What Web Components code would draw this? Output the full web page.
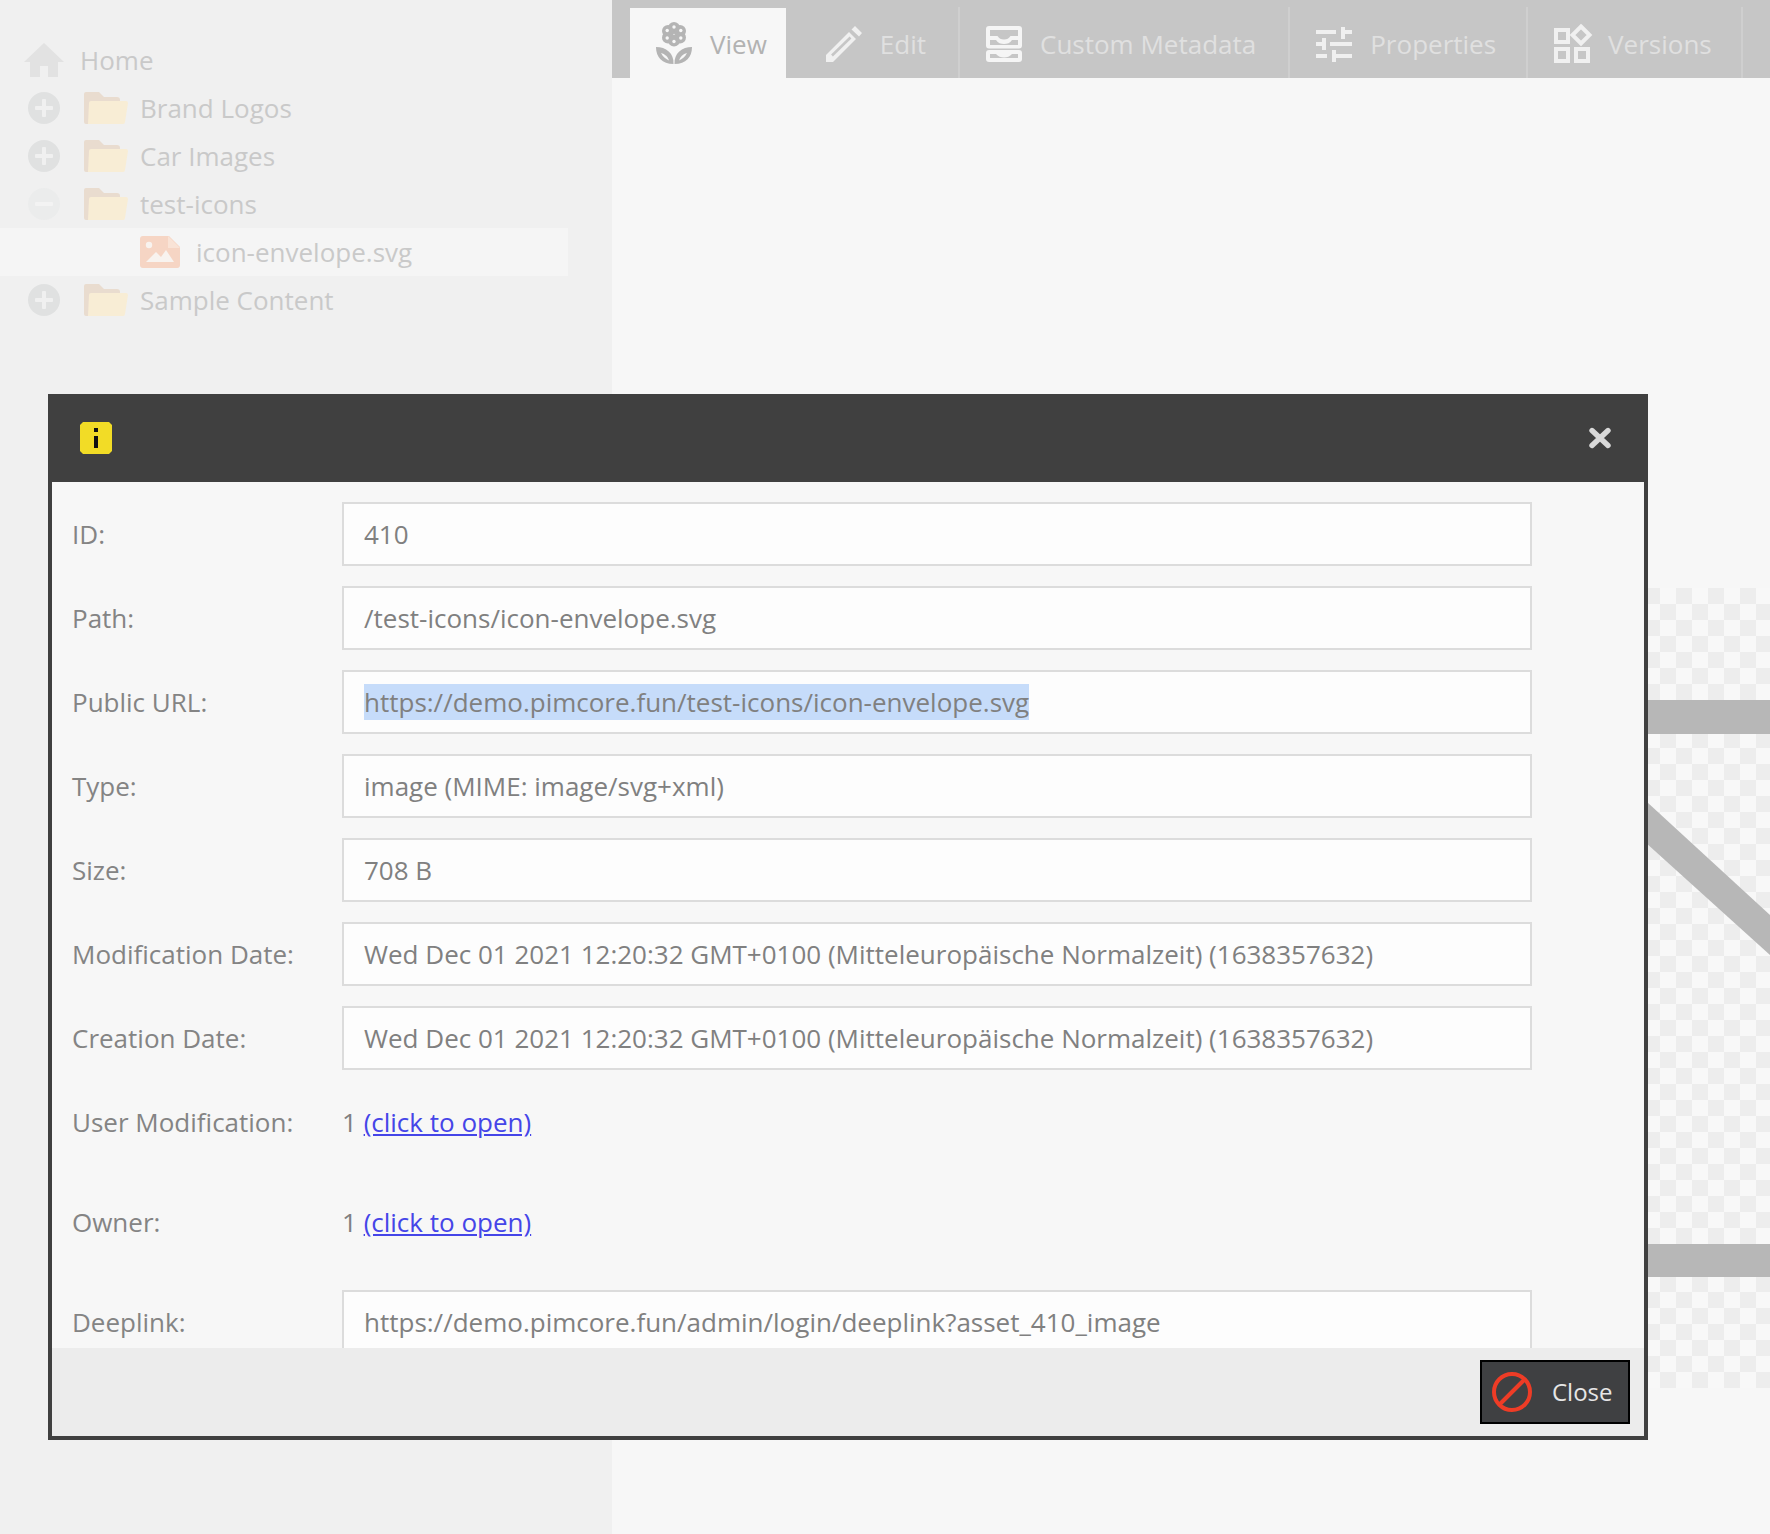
<!DOCTYPE html>
<html lang="en">
<head>
<meta charset="utf-8">
<title>Asset info</title>
<style>
  html, body { margin: 0; height: 100%; }
  body { font-family: "Open Sans", "Noto Sans", sans-serif; overflow: hidden; }
  svg { display: block; }
</style>
</head>
<body>
<pim-shell>
  <pim-tree slot="side">
    <pim-tree-row indent="24" space="16">
      <svg slot="icon" width="40" height="34" viewBox="0 0 40 34"><path fill="#e2e2e2" d="M20 0 40 19H34V34H24V23H16V34H6V19H0Z"/></svg>
      Home
    </pim-tree-row>
    <pim-tree-row indent="28" space="12">
      <pim-expander slot="expander"></pim-expander><pim-folder slot="icon"></pim-folder>
      Brand Logos
    </pim-tree-row>
    <pim-tree-row indent="28" space="12">
      <pim-expander slot="expander"></pim-expander><pim-folder slot="icon"></pim-folder>
      Car Images
    </pim-tree-row>
    <pim-tree-row indent="28" space="12">
      <pim-expander slot="expander" open></pim-expander><pim-folder slot="icon"></pim-folder>
      test-icons
    </pim-tree-row>
    <pim-tree-row indent="140" space="16" selected>
      <svg slot="icon" width="40" height="32" viewBox="0 0 40 32"><path fill="#f6d5c4" d="M3 0H29L40 11V29a3 3 0 0 1-3 3H3a3 3 0 0 1-3-3V3a3 3 0 0 1 3-3Z"/><path fill="#f9e3d6" d="M28 0 40 12H28Z"/><circle cx="9" cy="9" r="3.2" fill="#f8f3ef"/><path fill="#f8f3ef" d="M6 26 16 16 21 21 26 14 34 26Z"/></svg>
      icon-envelope.svg
    </pim-tree-row>
    <pim-tree-row indent="28" space="12">
      <pim-expander slot="expander"></pim-expander><pim-folder slot="icon"></pim-folder>
      Sample Content
    </pim-tree-row>
  </pim-tree>

  <pim-tabs slot="tabs">
    <pim-tab active style="--before:26px;--after:19px">
      <svg slot="icon" width="36" height="42" viewBox="0 0 36 42" style="margin-top:-2px">
        <g fill="#b4b4b4">
          <circle cx="18" cy="6" r="6"/><circle cx="24" cy="9" r="6"/><circle cx="24" cy="15.5" r="6"/>
          <circle cx="18" cy="18.5" r="6"/><circle cx="12" cy="15.5" r="6"/><circle cx="12" cy="9" r="6"/>
          <path d="M0 25C10 25 18 31 17.5 42 6 42 0 35 0 25Z"/><path d="M36 25C26 25 18 31 18.5 42 30 42 36 35 36 25Z"/>
        </g>
        <g fill="#f7f7f7">
          <circle cx="18" cy="5" r="1.7"/><circle cx="24.8" cy="8.5" r="1.7"/><circle cx="24.8" cy="16" r="1.7"/>
          <circle cx="18" cy="19.5" r="1.7"/><circle cx="11.2" cy="16" r="1.7"/><circle cx="11.2" cy="8.5" r="1.7"/>
          <path d="M5 31C9 32 12 35 13 38.500 10 37 7 35 5 31Z"/><path d="M31 31C27 32 24 35 23 38.500 26 37 29 35 31 31Z"/>
        </g>
      </svg>
      View
    </pim-tab>
    <pim-tab style="--before:40px;--after:34px">
      <svg slot="icon" width="36" height="36" viewBox="0 0 36 36">
        <path fill="#f0f0f0" d="M29 0 36 7 33 10.5 25.5 3.5ZM23 6 30 13 7 36H0V29Z"/>
        <path stroke="#c6c6c6" stroke-width="2.6" d="M6 29.5 24.5 11.5"/>
      </svg>
      Edit
    </pim-tab>
    <pim-tab style="--before:26px;--after:34px">
      <svg slot="icon" width="36" height="36" viewBox="0 0 36 36">
        <rect width="36" height="22.5" rx="3" fill="#f5f5f5"/><rect y="24" width="36" height="12" rx="3" fill="#f5f5f5"/>
        <g fill="#c6c6c6">
          <path d="M4 4H32V10H24.5C23 12.5 21 13.5 18 13.5S13 12.5 11.500 10H4Z"/>
          <path d="M4 14H10C12 17 15 18 18 18S24 17 26 14H32V19H4Z"/>
          <path d="M4 28H10C12 30.5 15 31.5 18 31.5S24 30.5 26 28H32V32H4Z"/>
        </g>
      </svg>
      Custom Metadata
    </pim-tab>
    <pim-tab style="--before:26px;--after:32px">
      <svg slot="icon" width="36" height="36" viewBox="0 0 36 36" fill="#f0f0f0">
        <path d="M0 4H20V8H0ZM25 1H29V13H25ZM29 4H36V8H29ZM0 16H10V20H0ZM6 12H10V24H6ZM14 16H36V20H14ZM0 28H11V32H0ZM16 24H20V36H16ZM20 28H36V32H20Z"/>
      </svg>
      Properties
    </pim-tab>
    <pim-tab style="--before:26px;--after:31px">
      <svg slot="icon" width="36" height="40" viewBox="0 0 36 40" fill="none" stroke="#f0f0f0" stroke-width="4" style="margin-top:-2px;overflow:visible">
        <rect x="2" y="7" width="12" height="12"/><rect x="2" y="26" width="12" height="12"/><rect x="22" y="26" width="12" height="12"/>
        <path d="M27 3.5 35.5 12 27 20.5 18.5 12Z"/>
      </svg>
      Versions
    </pim-tab>
  </pim-tabs>

  <pim-preview slot="main"></pim-preview>

  <pim-dialog slot="dialog">
    <pim-field label="ID:">410</pim-field>
    <pim-field label="Path:">/test-icons/icon-envelope.svg</pim-field>
    <pim-field label="Public URL:"><mark>https://demo.pimcore.fun/test-icons/icon-envelope.svg</mark></pim-field>
    <pim-field label="Type:">image (MIME: image/svg+xml)</pim-field>
    <pim-field label="Size:">708 B</pim-field>
    <pim-field label="Modification Date:">Wed Dec 01 2021 12:20:32 GMT+0100 (Mitteleuropäische Normalzeit) (1638357632)</pim-field>
    <pim-field label="Creation Date:">Wed Dec 01 2021 12:20:32 GMT+0100 (Mitteleuropäische Normalzeit) (1638357632)</pim-field>
    <pim-field label="User Modification:" plain>1 <a href="#">(click to open)</a></pim-field>
    <pim-field label="Owner:" plain>1 <a href="#">(click to open)</a></pim-field>
    <pim-field label="Deeplink:">https://demo.pimcore.fun/admin/login/deeplink?asset_410_image</pim-field>
    <pim-button slot="footer">Close</pim-button>
  </pim-dialog>
</pim-shell>

<script>
class PimShell extends HTMLElement {
  constructor() {
    super();
    this.attachShadow({ mode: "open" }).innerHTML = `
      <style>
        :host { display: grid; grid-template-columns: 612px 1fr; height: 1534px; position: relative; overflow: hidden; background: #f7f7f7; }
        .side { background: #f0f0f0; }
        .right { display: flex; flex-direction: column; min-width: 0; }
        .main { flex: 1; position: relative; overflow: hidden; }
      </style>
      <div class="side"><slot name="side"></slot></div>
      <div class="right">
        <slot name="tabs"></slot>
        <div class="main"><slot name="main"></slot></div>
      </div>
      <slot name="dialog"></slot>`;
  }
}

class PimTree extends HTMLElement {
  constructor() {
    super();
    this.attachShadow({ mode: "open" }).innerHTML = `
      <style>
        :host { display: flex; flex-direction: column; width: 568px; padding-top: 36px; }
      </style>
      <slot></slot>`;
  }
}

class PimTreeRow extends HTMLElement {
  constructor() {
    super();
    this.attachShadow({ mode: "open" }).innerHTML = `
      <style>
        :host { display: flex; align-items: center; height: 48px; font-size: 26px; color: #c9c9c9; }
        :host([selected]) { background: #f5f5f5; }
        .expander { display: flex; }
        ::slotted([slot=expander]) { margin-right: 24px; }
      </style>
      <div class="expander"><slot name="expander"></slot></div>
      <slot name="icon"></slot>
      <span class="label"><slot></slot></span>`;
    this.style.paddingLeft = this.getAttribute("indent") + "px";
    this.shadowRoot.querySelector(".label").style.marginLeft = this.getAttribute("space") + "px";
  }
}

class PimExpander extends HTMLElement {
  constructor() {
    super();
    const open = this.hasAttribute("open");
    const fill = open ? "#ebecec" : "#e0e1e1";
    const mark = open ? "#f3f3f3" : "#f0f0f0";
    const bar = '<rect x="7" y="14" width="18" height="4" rx="1"/>';
    const cross = '<rect x="14" y="7" width="4" height="18" rx="1"/>';
    this.attachShadow({ mode: "open" }).innerHTML = `
      <style>
        :host { display: block; width: 32px; height: 32px; }
      </style>
      <svg width="32" height="32" viewBox="0 0 32 32" style="display:block"><circle cx="16" cy="16" r="16" fill="${fill}"/><g fill="${mark}">${bar}${open ? "" : cross}</g></svg>`;
  }
}

class PimFolder extends HTMLElement {
  constructor() {
    super();
    this.attachShadow({ mode: "open" }).innerHTML = `
      <style>
        :host { display: block; width: 44px; height: 32px; }
      </style>
      <svg width="44" height="32" viewBox="0 0 44 32" style="display:block">
        <path fill="#e9dccf" d="M2 0H15L20 5H33a3 3 0 0 1 3 3V32H2a2 2 0 0 1-2-2V2a2 2 0 0 1 2-2Z"/>
        <path fill="#f8edd5" d="M7 9H42a2 2 0 0 1 2 2L41 30a2 2 0 0 1-2 2H4L5 11a2 2 0 0 1 2-2Z"/>
      </svg>`;
  }
}

class PimTabs extends HTMLElement {
  constructor() {
    super();
    this.attachShadow({ mode: "open" }).innerHTML = `
      <style>
        :host { display: flex; height: 70px; padding: 8px 0 0 18px; background: #c6c6c6; }
      </style>
      <slot></slot>`;
  }
}

class PimTab extends HTMLElement {
  constructor() {
    super();
    this.attachShadow({ mode: "open" }).innerHTML = `
      <style>
        :host { display: flex; align-items: center; gap: 18px; box-sizing: border-box; padding: 2px var(--after) 0 var(--before); font-size: 26px; color: #e0e0e0; position: relative; }
        :host(:not([active]))::after { content: ""; position: absolute; right: 0; top: -1px; bottom: 0; width: 2px; background: #cfcfcf; }
        :host([active]) { background: #f7f7f7; color: #b2b2b2; }
      </style>
      <slot name="icon"></slot><span><slot></slot></span>`;
  }
}

class PimPreview extends HTMLElement {
  constructor() {
    super();
    // checker board starts under the dialog, only its right end shows
    this.attachShadow({ mode: "open" }).innerHTML = `
      <style>
        :host { position: absolute; left: 184px; top: 510px; width: 974px; height: 800px;
          background: repeating-conic-gradient(#ededed 0 25%, #f8f8f8 0 50%) 0 0 / 32px 32px; }
      </style>
      <svg width="974" height="800" viewBox="0 0 974 800" fill="#b7b7b7" style="display:block">
        <rect y="112" width="974" height="34"/>
        <rect y="656" width="974" height="33"/>
        <path d="M618 0 974 327V367L568 0Z"/>
      </svg>`;
  }
}

class PimDialog extends HTMLElement {
  constructor() {
    super();
    this.attachShadow({ mode: "open" }).innerHTML = `
      <style>
        :host { position: absolute; left: 48px; top: 394px; width: 1600px; height: 1046px; box-sizing: border-box;
          border: 4px solid #404040; border-top: 0; display: flex; flex-direction: column; background: #f7f7f7; }
        header { flex: none; height: 88px; margin: 0 -4px; background: #404040; display: flex; align-items: center; justify-content: space-between; padding: 0 37px 0 32px; }
        .body { flex: 1; min-height: 0; overflow: hidden; display: flex; flex-direction: column; gap: 20px; padding: 20px; }
        footer { flex: none; height: 88px; background: #ececec; display: flex; align-items: center; justify-content: flex-end; padding-right: 14px; }
      </style>
      <header>
        <svg width="32" height="32" viewBox="0 0 32 32" style="display:block">
          <path fill="#f2dc26" d="M3 0H29L32 3V29L29 32H3L0 29V3Z"/>
          <path fill="#111" d="M14 6H18V10H14ZM14 14H18V26H14Z"/>
        </svg>
        <svg width="22" height="22" viewBox="0 0 22 22" style="display:block">
          <path stroke="#d9d9d9" stroke-width="5.4" stroke-linecap="round" d="M3 3.5 19 18.5M19 3.5 3 18.5"/>
        </svg>
      </header>
      <div class="body"><slot></slot></div>
      <footer><slot name="footer"></slot></footer>`;
  }
}

class PimField extends HTMLElement {
  constructor() {
    super();
    this.attachShadow({ mode: "open" }).innerHTML = `
      <style>
        :host { display: grid; grid-template-columns: 270px 1190px; flex: none; font-size: 26px; color: #808080; line-height: 36px; }
        :host([plain]) { height: 80px; }
        .label { height: 64px; display: flex; align-items: center; color: #848484; }
        .value { height: 64px; box-sizing: border-box; border: 2px solid #dcdcdc; background: #fdfdfd; padding: 12px 20px; white-space: nowrap; }
        :host([plain]) .value { border: 0; background: none; padding: 14px 0; }
        ::slotted(mark) { background: #c6dcfa; color: inherit; display: inline-block; }
        ::slotted(a) { color: #4545e8; }
      </style>
      <div class="label"></div>
      <div class="value"><slot></slot></div>`;
    this.shadowRoot.querySelector(".label").textContent = this.getAttribute("label");
  }
}

class PimButton extends HTMLElement {
  constructor() {
    super();
    this.attachShadow({ mode: "open" }).innerHTML = `
      <style>
        :host { display: flex; align-items: center; gap: 20px; box-sizing: border-box; width: 150px; height: 64px; padding-left: 10px; border: 2px solid #000; background: #3f4042; color: #e6e6e6; font-size: 24px; }
        span { padding-bottom: 2px; }
      </style>
      <svg width="40" height="40" viewBox="0 0 40 40" fill="none" stroke="#ee3c26" stroke-width="4" style="display:block">
        <circle cx="20" cy="20" r="18"/><path d="M8 32 32 8"/>
      </svg>
      <span><slot></slot></span>`;
  }
}

customElements.define("pim-shell", PimShell);
customElements.define("pim-tree", PimTree);
customElements.define("pim-tree-row", PimTreeRow);
customElements.define("pim-expander", PimExpander);
customElements.define("pim-folder", PimFolder);
customElements.define("pim-tabs", PimTabs);
customElements.define("pim-tab", PimTab);
customElements.define("pim-preview", PimPreview);
customElements.define("pim-dialog", PimDialog);
customElements.define("pim-field", PimField);
customElements.define("pim-button", PimButton);
</script>
</body>
</html>
